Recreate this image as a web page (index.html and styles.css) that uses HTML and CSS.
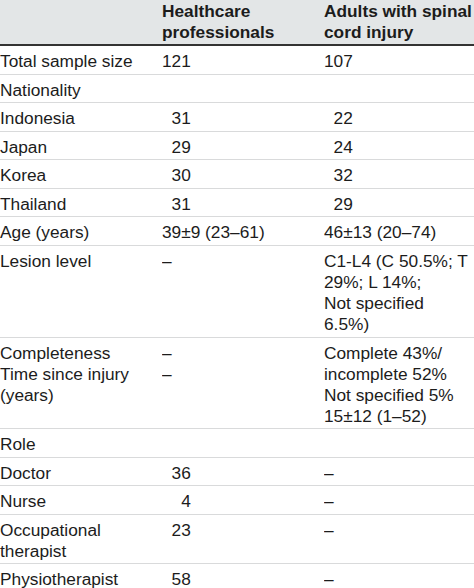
FILE: index.html
```html
<!DOCTYPE html>
<html>
<head>
<meta charset="utf-8">
<link rel="stylesheet" href="styles.css">
</head>
<body>
<div class="tbl">
  <div class="row head">
    <div class="cell"></div>
    <div class="cell">Healthcare<br>professionals</div>
    <div class="cell">Adults with spinal<br>cord injury</div>
  </div>
  <div class="row"><div class="cell">Total sample size</div><div class="cell"><span class="n">121</span></div><div class="cell"><span class="n">107</span></div></div>
  <div class="row"><div class="cell">Nationality</div><div class="cell"></div><div class="cell"></div></div>
  <div class="row"><div class="cell">Indonesia</div><div class="cell"><span class="n">31</span></div><div class="cell"><span class="n">22</span></div></div>
  <div class="row"><div class="cell">Japan</div><div class="cell"><span class="n">29</span></div><div class="cell"><span class="n">24</span></div></div>
  <div class="row"><div class="cell">Korea</div><div class="cell"><span class="n">30</span></div><div class="cell"><span class="n">32</span></div></div>
  <div class="row"><div class="cell">Thailand</div><div class="cell"><span class="n">31</span></div><div class="cell"><span class="n">29</span></div></div>
  <div class="row"><div class="cell">Age (years)</div><div class="cell">39±9 (23–61)</div><div class="cell">46±13 (20–74)</div></div>
  <div class="row"><div class="cell">Lesion level</div><div class="cell">–</div><div class="cell">C1-L4 (C 50.5%; T<br>29%; L 14%;<br>Not specified<br>6.5%)</div></div>
  <div class="row"><div class="cell">Completeness<br>Time since injury<br>(years)</div><div class="cell">–<br>–</div><div class="cell">Complete 43%/<br>incomplete 52%<br>Not specified 5%<br>15±12 (1–52)</div></div>
  <div class="row"><div class="cell">Role</div><div class="cell"></div><div class="cell"></div></div>
  <div class="row"><div class="cell">Doctor</div><div class="cell"><span class="n">36</span></div><div class="cell">–</div></div>
  <div class="row"><div class="cell">Nurse</div><div class="cell"><span class="n">4</span></div><div class="cell">–</div></div>
  <div class="row"><div class="cell">Occupational<br>therapist</div><div class="cell"><span class="n">23</span></div><div class="cell">–</div></div>
  <div class="row"><div class="cell">Physiotherapist</div><div class="cell"><span class="n">58</span></div><div class="cell">–</div></div>
</div>
</body>
</html>
```

FILE: styles.css
```css
html, body {
  margin: 0;
  padding: 0;
  background: #ffffff;
  overflow: hidden;
}
body {
  width: 474px;
  height: 588px;
}
.tbl {
  width: 474px;
  font-family: "Liberation Sans", Arial, sans-serif;
  font-size: 17.3px;
  line-height: 21px;
  color: #1c1c1c;
}
.row {
  display: grid;
  grid-template-columns: 162px 162px 150px;
  padding: 5px 0 1.57px 0;
  border-bottom: 1px solid #d9dadb;
}
.row.head {
  background: #e3e6e7;
  font-weight: bold;
  padding: 1px 0 1px 0;
  border-bottom: 2px solid #333333;
}
.cell {
  white-space: nowrap;
  overflow: hidden;
}
.n {
  display: inline-block;
  width: 3ch;
  text-align: right;
}
```
